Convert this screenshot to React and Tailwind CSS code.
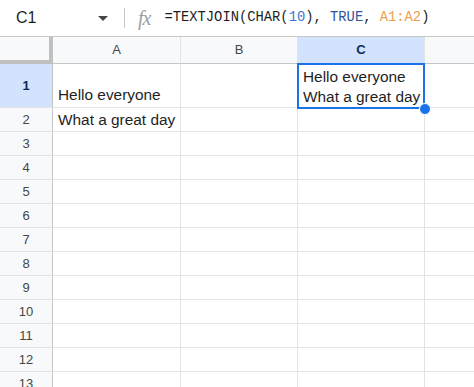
import React from 'react';

const cols = [
  { key: 'A', w: 'w-[128px]' },
  { key: 'B', w: 'w-[117px]' },
  { key: 'C', w: 'w-[127px]' },
];

const rowNums = [3, 4, 5, 6, 7, 8, 9, 10, 11, 12, 13];

const Cell = ({ w, children, className = '' }) => (
  <div className={`${w} shrink-0 h-full border-r border-[#e2e3e3] ${className}`}>{children}</div>
);

const App = () => {
  return (
    <div className="w-[474px] h-[387px] overflow-hidden bg-white font-['Liberation_Sans',Arial,sans-serif] text-[#1f1f1f]">
      {/* formula bar */}
      <div className="flex items-center h-[37px] border-b border-[#c7c7c7]">
        <div className="w-[118px] shrink-0 flex items-center pl-[16px] pr-[10px]">
          <span className="text-[16px]">C1</span>
          <svg className="ml-auto" width="10" height="5" viewBox="0 0 10 5">
            <path d="M0 0h10L5 5z" fill="#444746" />
          </svg>
        </div>
        <div className="w-px h-[20px] bg-[#c7c7c7] ml-[6px]" />
        <span className="ml-[13px] font-['Liberation_Serif',serif] italic text-[20px] text-[#9aa0a6] tracking-[-1px]">fx</span>
        <div className="ml-[14px] font-['Liberation_Mono',monospace] text-[13.8px] whitespace-nowrap">
          =TEXTJOIN(CHAR(<span className="text-[#3c78d8]">10</span>), <span className="text-[#2f5597]">TRUE</span>, <span className="text-[#eea04e]">A1:A2</span>)
        </div>
      </div>

      {/* column headers */}
      <div className="flex h-[27px] bg-[#f8f9fa] text-[13px] text-[#444746]">
        <div className="w-[53px] shrink-0 h-full border-r-[4px] border-b-[4px] border-[#c0c0c0] bg-[#f8f9fa]" />
        {cols.map((c) => (
          <Cell
            key={c.key}
            w={c.w}
            className={`flex items-center justify-center border-b border-b-[#c4c7c5] ${c.key === 'C' ? 'bg-[#d3e3fd] font-bold text-[#0b2b5b]' : ''}`}
          >
            {c.key}
          </Cell>
        ))}
        <div className="flex-1 h-full border-b border-[#c4c7c5]" />
      </div>

      {/* row 1 */}
      <div className="flex h-[44px] border-b border-[#e2e3e3] text-[15.4px]">
        <div className="w-[53px] shrink-0 h-full flex items-center justify-center bg-[#d3e3fd] border-r border-[#c4c7c5] text-[13px] font-bold text-[#0b2b5b]">
          1
        </div>
        <Cell w="w-[128px]" className="flex items-end pl-[5px] pb-[2px] leading-[20px]">
          Hello everyone
        </Cell>
        <Cell w="w-[117px]" />
        <Cell w="w-[127px]" className="relative">
          <div className="absolute -left-px -top-px -right-px -bottom-[2px] border-2 border-[#1a73e8] pl-[4px] pt-[2px] leading-[20px]">
            <div>Hello everyone</div>
            <div>What a great day</div>
          </div>
          <div className="absolute -right-[7px] -bottom-[8px] w-[12px] h-[12px] rounded-full bg-[#1a73e8] border border-white" />
        </Cell>
        <div className="flex-1" />
      </div>

      {/* row 2 */}
      <div className="flex h-[24px] border-b border-[#e2e3e3] text-[15.4px]">
        <div className="w-[53px] shrink-0 h-full flex items-center justify-center bg-[#f8f9fa] border-r border-[#c4c7c5] text-[13px] text-[#444746]">
          2
        </div>
        <Cell w="w-[128px]" className="flex items-end pl-[5px] pb-[1px] leading-[20px] whitespace-nowrap">
          What a great day
        </Cell>
        <Cell w="w-[117px]" />
        <Cell w="w-[127px]" />
        <div className="flex-1" />
      </div>

      {rowNums.map((n) => (
        <div key={n} className="flex h-[24px] border-b border-[#e2e3e3]">
          <div className="w-[53px] shrink-0 h-full flex items-center justify-center bg-[#f8f9fa] border-r border-[#c4c7c5] text-[13px] text-[#444746]">
            {n}
          </div>
          <Cell w="w-[128px]" />
          <Cell w="w-[117px]" />
          <Cell w="w-[127px]" />
          <div className="flex-1" />
        </div>
      ))}
    </div>
  );
};

export default App;
